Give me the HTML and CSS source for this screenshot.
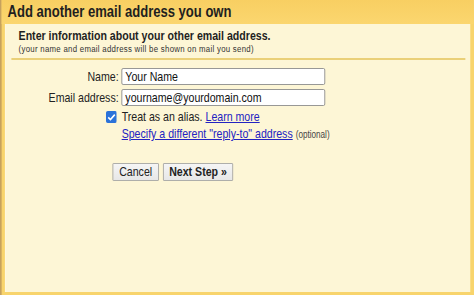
FILE: index.html
```html
<!DOCTYPE html>
<html>
<head>
<meta charset="utf-8">
<link rel="stylesheet" href="styles.css">
</head>
<body>
<div class="page">
  <div class="dialog">
    <div class="header">Add another email address you own</div>
    <div class="content">
      <div class="intro">
        <div class="intro-title">Enter information about your other email address.</div>
        <div class="intro-sub">(your name and email address will be shown on mail you send)</div>
      </div>
      <div class="form">
        <div class="row">
          <label class="label">Name:</label>
          <span class="input">Your Name</span>
        </div>
        <div class="row">
          <label class="label">Email address:</label>
          <span class="input">yourname@yourdomain.com</span>
        </div>
        <div class="row check-row">
          <span class="label check-cell"><svg class="checkbox" viewBox="0 0 12 12" preserveAspectRatio="none"><rect x="0" y="0" width="12" height="12" rx="2" fill="#2b72d9"/><path d="M2.5 6.3 L4.9 8.6 L9.6 3.6" fill="none" stroke="#fff" stroke-width="1.7"/></svg></span>
          <span class="text-line">Treat as an alias. <a class="link" href="#">Learn more</a></span>
        </div>
        <div class="row reply-row">
          <span class="label"></span>
          <span class="text-line"><a class="link" href="#">Specify a different "reply-to" address</a> <span class="optional">(optional)</span></span>
        </div>
      </div>
      <div class="buttons">
        <button class="btn">Cancel</button>
        <button class="btn primary">Next Step »</button>
      </div>
    </div>
  </div>
</div>
</body>
</html>
```

FILE: styles.css
```css
html, body {
  margin: 0;
  padding: 0;
  overflow: hidden;
}
body {
  width: 474px;
  height: 295px;
  background: #f8d46c;
  font-family: "Liberation Sans", Arial, sans-serif;
  color: #222;
}
/* the source screenshot is horizontally compressed; reproduce that */
.page {
  width: 581px;
  height: 295px;
  transform: scaleX(0.815);
  transform-origin: 0 0;
}
.dialog {
  height: 295px;
  box-sizing: border-box;
  border-left: 2.5px solid #c6a25e;
  background: #f8d46c;
  padding: 0 4px 3px 3.6px;
  display: flex;
  flex-direction: column;
}
.header {
  height: 24px;
  line-height: 24px;
  margin: 0 -4px 0 -3.6px;
  padding-left: 7.3px;
  font-size: 16px;
  font-weight: bold;
  color: #1f1f1f;
  background: linear-gradient(#f8cf62, #fbd66f);
}
.content {
  flex: 1;
  background: #fdf6d6;
  box-shadow: inset 1px 0 0 #fff8e0;
}
.intro {
  margin: 0 6.2px 0 8.6px;
  padding: 3.5px 0 4.5px 8.6px;
  border-bottom: 2px solid #ead078;
}
.intro-title {
  font-size: 13px;
  font-weight: bold;
  line-height: 15px;
  color: #1f1f1f;
}
.intro-sub {
  font-size: 9.6px;
  line-height: 11px;
  letter-spacing: 0.35px;
  color: #333;
}
.form {
  display: flex;
  flex-direction: column;
  gap: 4px;
  margin-top: 8px;
  font-size: 13px;
}
.row {
  display: flex;
  align-items: center;
  gap: 3.7px;
}
.label {
  width: 140px;
  flex: none;
  text-align: right;
  line-height: 17px;
  color: #222;
}
.input {
  display: block;
  box-sizing: border-box;
  width: 250px;
  height: 17px;
  border: 1px solid #8d8d8d;
  border-radius: 2px;
  background: #fff;
  padding: 0 3.5px;
  line-height: 15px;
  font-size: 13px;
  color: #111;
}
.check-row .label,
.reply-row .label {
  line-height: 14px;
  height: 14px;
}
.check-cell {
  display: flex;
  justify-content: flex-end;
  align-items: center;
  box-sizing: border-box;
  padding-right: 2.5px;
}
.checkbox {
  display: block;
  width: 13.5px;
  height: 12px;
}
.text-line {
  line-height: 14px;
  white-space: nowrap;
}
.reply-row {
  margin-top: -1px;
}
.link {
  color: #2323c2;
  text-decoration: underline;
}
.optional {
  font-size: 10px;
  color: #444;
}
.buttons {
  display: flex;
  gap: 4.9px;
  margin: 20.5px 0 0 132.6px;
}
.btn {
  height: 18px;
  box-sizing: border-box;
  padding: 0 7px;
  border: 1px solid #a6a6a6;
  border-radius: 1px;
  background: linear-gradient(#f5f5f5, #e7e7e7);
  font-family: "Liberation Sans", Arial, sans-serif;
  font-size: 13px;
  color: #222;
  line-height: 16px;
}
.btn.primary {
  font-weight: bold;
}
```
